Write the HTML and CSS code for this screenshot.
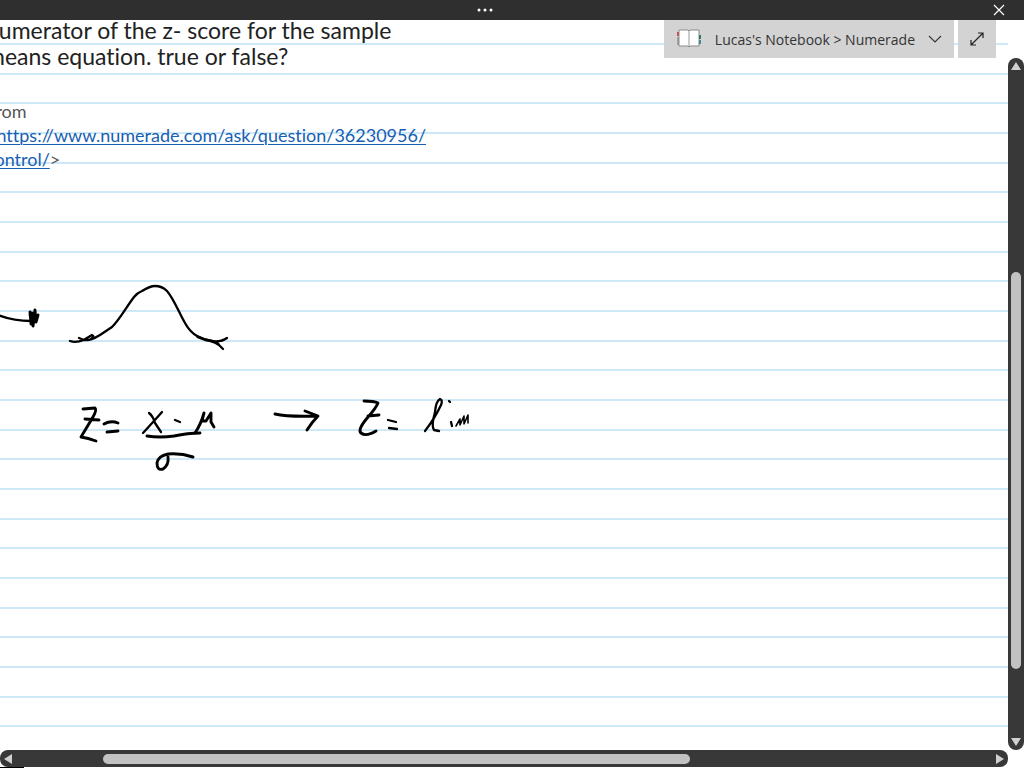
FILE: index.html
```html
<!DOCTYPE html>
<html lang="en">
<head>
  <meta charset="UTF-8">
  <title>Lucas's Notebook - Numerade</title>
  <link rel="stylesheet" href="styles.css">
</head>
<body>

<header class="titlebar">
  <button class="more" aria-label="More options">
    <svg width="16" height="4" viewBox="0 0 16 4" fill="#fff"><circle cx="2" cy="2" r="1.5"/><circle cx="8" cy="2" r="1.5"/><circle cx="14" cy="2" r="1.5"/></svg>
  </button>
  <button class="close" aria-label="Close">
    <svg width="12" height="12" viewBox="0 0 12 12" stroke="#fff" stroke-width="1.2"><path d="M1 1L11 11M11 1L1 11"/></svg>
  </button>
</header>

<div class="workspace">
  <main class="page">
    <div class="note">
      <h1>numerator of the z- score for the sample<br>means equation. true or false?</h1>
      <p>From<br>&lt;<a href="#">https://www.numerade.com/ask/question/36230956/<br>control/</a>&gt;</p>
    </div>

    <!-- handwriting -->
    <svg class="ink" width="500" height="500" viewBox="0 20 500 500" aria-label="Bell curve, z = (x - mu) / sigma, z = lim">
      <!-- arrow into the curve -->
      <path d="M-2 315C8 319 18 321 31 321"/>
      <path class="bold" d="M30 312L31 324L32 313L33 326L35 310L36 322L38 315L34 322L30 315L37 318"/>
      <!-- bell curve -->
      <path d="M70 341C76 343 83 341 87 338L92 335Q95 336 91 339M79 338L84 340C90 341 95 338 100 335L112 327C120 319 125 309 134 297Q137 293 142 291Q150 286 155 286Q162 286 167 291C174 299 179 313 185 323Q190 332 197 336C206 341 219 344 227 338"/>
      <path class="bold" d="M198 337L206 340Q214 341 218 344"/>
      <path d="M218 344L223 349"/>
      <!-- z = -->
      <path class="bold" d="M83 409L95 408Q97 410 93 417L81 437Q88 438 96 441M85 419L99 420M104 424Q111 420 118 423M107 432L118 431"/>
      <!-- x - mu over sigma -->
      <path d="M149 413Q153 416 155 423L161 432M162 412Q155 420 143 433M175 420L180 422"/>
      <path class="bold" d="M195 433Q201 424 204 413L202 421L206 421L211 413L211 422L214 427"/>
      <path class="bold" d="M147 436Q160 438 174 436Q188 433 200 433M193 457Q181 453 168 454Q158 456 157 463Q157 471 163 469Q169 465 168 457"/>
      <!-- arrow -->
      <path class="bold" d="M275 414Q288 417 317 416M305 411L318 416Q312 422 307 430"/>
      <!-- z = lim -->
      <path class="bold" d="M364 401Q374 401 378 403Q376 408 368 417Q357 430 361 433Q366 437 376 431M368 416L379 415"/>
      <path d="M388 420L396 422M389 428L397 429"/>
      <path d="M425 431Q435 418 441 405Q443 400 440 399Q436 401 435 412Q431 426 434 430L439 431M449 401L450 402M451 422L452 426"/>
      <path class="fine" d="M456 426L460 419V425L464 416V424L468 415V423"/>
    </svg>

    <div class="toolbar">
      <button class="notebook">
        <svg width="26" height="20" viewBox="0 0 26 20">
          <path d="M3 1H12L13 2L14 1H23V17H14L13 18L12 17H3Z" fill="#fff" stroke="#8b8b8b"/>
          <path d="M13 2V17" stroke="#999"/>
          <path d="M2 3V7" stroke="#c65353" stroke-width="2"/>
          <path d="M2 8V16" stroke="#777"/>
          <path d="M24 6V10" stroke="#35765d" stroke-width="2"/>
          <path d="M24 11V15" stroke="#43899b" stroke-width="2"/>
        </svg>
        <span>Lucas's Notebook &gt; Numerade</span>
        <svg width="14" height="8" viewBox="0 0 14 8" fill="none" stroke="#333" stroke-width="1.1"><path d="M1 1L7 7L13 1"/></svg>
      </button>
      <button class="expand" aria-label="Full page view">
        <svg width="14" height="14" viewBox="0 0 14 14" fill="none" stroke="#222" stroke-width="1.2"><path d="M1 13L13 1M8 1H13V6M1 8V13H6"/></svg>
      </button>
    </div>
  </main>

  <div class="scroll vertical">
    <button aria-label="Scroll up"><svg width="10" height="8" viewBox="0 0 10 8"><path d="M5 0L10 8H0Z"/></svg></button>
    <div class="track"><div class="thumb"></div></div>
    <button aria-label="Scroll down"><svg width="10" height="8" viewBox="0 0 10 8"><path d="M0 0H10L5 8Z"/></svg></button>
  </div>
</div>

<div class="scroll horizontal">
  <button aria-label="Scroll left"><svg width="8" height="10" viewBox="0 0 8 10"><path d="M8 0V10L0 5Z"/></svg></button>
  <div class="track"><div class="thumb"></div></div>
  <button aria-label="Scroll right"><svg width="8" height="10" viewBox="0 0 8 10"><path d="M0 0V10L8 5Z"/></svg></button>
</div>
<div class="edge"></div>

</body>
</html>
```

FILE: styles.css
```css
* { box-sizing: border-box; }

body {
  margin: 0;
  height: 100vh;
  display: flex;
  flex-direction: column;
  background: #fff;
  font-family: Lato, sans-serif;
  font-variant-ligatures: none;
  overflow: hidden;
}

button {
  display: flex;
  align-items: center;
  justify-content: center;
  padding: 0;
  border: none;
  background: none;
  font-family: inherit;
  cursor: pointer;
}

.titlebar {
  display: grid;
  grid-template-columns: 12fr 32px 13fr;
  height: 20px;
  padding-right: 15px;
  background: #2f2f2f;
}
.titlebar .more { grid-column: 2; }
.titlebar .close { justify-self: end; width: 20px; }

.workspace {
  flex: 1;
  min-height: 0;
  display: flex;
}

.page {
  position: relative;
  flex: 1;
  min-width: 0;
  overflow: hidden;
  /* three rules to each 89px */
  background: linear-gradient(#cfe8f7 2px, transparent 2px 30px, #cfe8f7 30px 32px, transparent 32px 59px, #cfe8f7 59px 61px, transparent 61px) 0 23px / 100% 89px;
}

/* the page is scrolled sideways, so the note starts off the left edge */
.note {
  margin: -3px 0 0 -14px;
  white-space: nowrap;
}
.note h1 {
  margin: 0;
  color: #222;
  font-size: 23px;
  font-weight: 400;
  line-height: 26px;
}
.note p {
  margin: 30px 0 0;
  color: #555;
  font-size: 18px;
  line-height: 24px;
}
.note a {
  color: #1560b3;
  text-decoration-thickness: 1px;
  text-underline-offset: 2px;
}

.ink {
  position: absolute;
  top: 0;
  left: 0;
  fill: none;
  stroke: #000;
  stroke-width: 2.3;
  stroke-linecap: round;
  stroke-linejoin: round;
  pointer-events: none;
}
.ink .bold { stroke-width: 2.9; }
.ink .fine { stroke-width: 1.6; }

.toolbar {
  position: absolute;
  top: 0;
  right: 12px;
  display: flex;
  gap: 4px;
}
.toolbar button {
  height: 38px;
  background: #d3d3d3;
}
.notebook {
  gap: 13px;
  padding: 0 12px;
  color: #333;
  font-family: "Open Sans", sans-serif;
  font-size: 14px;
}
.expand { width: 38px; }

.scroll {
  display: flex;
  background: #383838;
  border-radius: 8px;
}
.scroll svg { fill: #d0d0d0; }
.scroll button { flex: 0 0 16px; }
.track { flex: 1; display: flex; }
.thumb { background: #c2c2c2; border-radius: 5px; }

.vertical {
  flex-direction: column;
  width: 16px;
  margin-top: 38px;
}
.vertical .track { flex-direction: column; align-items: center; }
.vertical .track::before { content: ""; flex: 198; }
.vertical .track::after { content: ""; flex: 65; }
.vertical .thumb { flex: 397; width: 10px; }

.horizontal {
  height: 17px;
  margin-right: 16px;
}
.horizontal .track { align-items: center; }
.horizontal .track::before { content: ""; flex: 87; }
.horizontal .track::after { content: ""; flex: 302; }
.horizontal .thumb { flex: 587; height: 10px; }

.edge { width: 24px; height: 1px; background: #000; }
```
